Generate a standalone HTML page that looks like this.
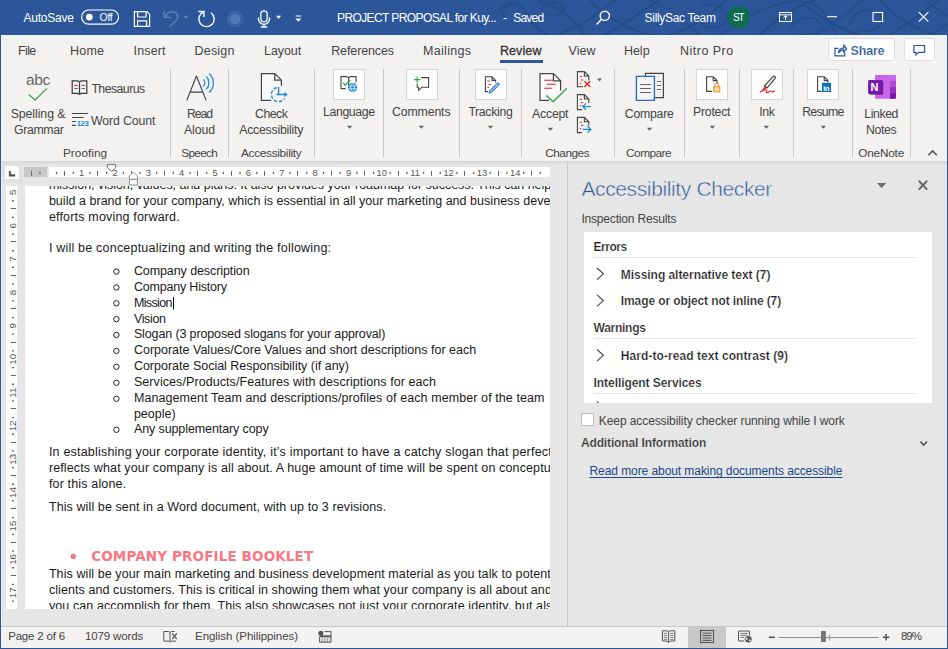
<!DOCTYPE html>
<html lang="en"><head><meta charset="utf-8"><title>PROJECT PROPOSAL - Word</title>
<style>
html,body{margin:0;padding:0;background:#e6e6e6;}
body{width:948px;height:649px;overflow:hidden;position:relative;font-family:"Liberation Sans",sans-serif;}
.a{position:absolute;}
.t{white-space:pre;}
.bx{top:69px;width:30px;height:29px;background:#fdfdfd;border:1px solid #d4d4d4;}
#pg{left:25px;top:186px;width:525px;height:423px;overflow:hidden;}
</style></head><body>

<!-- backgrounds -->
<div class="a" style="left:0;top:0;width:948px;height:35px;background:#2b579a"></div>
<div class="a" style="left:0;top:35px;width:948px;height:126px;background:#f3f2f1"></div>
<div class="a" style="left:0;top:161px;width:948px;height:465px;background:#e6e6e6"></div>
<div class="a" style="left:0;top:161px;width:948px;height:4px;background:linear-gradient(#d5d5d5,#e6e6e6)"></div>
<div class="a" style="left:0;top:626px;width:948px;height:1px;background:#c8c8c8"></div>
<div class="a" style="left:0;top:627px;width:948px;height:22px;background:#f3f2f1"></div>
<!-- tab selector, rulers, page -->
<div class="a" style="left:1px;top:162px;width:1px;height:464px;background:#efeeed"></div>
<div class="a" style="left:2px;top:162px;width:20px;height:20px;background:#dfdfdf"></div>
<div class="a" style="left:5px;top:166px;width:14px;height:13px;background:#fcfcfc"></div>
<div class="a" style="left:24px;top:167px;width:23px;height:10px;background:#c8c8c8"></div>
<div class="a" style="left:49px;top:167px;width:501px;height:10px;background:#fff"></div>
<div class="a" style="left:6px;top:186px;width:11px;height:423px;background:#fff"></div>
<div class="a" style="left:25px;top:186px;width:525px;height:423px;background:#fff"></div>
<div class="a" style="left:567px;top:164px;width:1px;height:462px;background:#c6c6c6"></div>
<!-- pane white box -->
<div class="a" style="left:584px;top:232px;width:348px;height:171px;background:#fff"></div>
<div class="a" style="left:594px;top:257px;width:321px;height:1px;background:#e1e1e1"></div>
<div class="a" style="left:594px;top:338px;width:321px;height:1px;background:#e1e1e1"></div>
<div class="a" style="left:594px;top:393px;width:321px;height:1px;background:#e1e1e1"></div>
<div class="a" style="left:581px;top:413px;width:11px;height:11px;background:#fff;border:1px solid #bdbdbd"></div>
<!-- share / comment buttons -->
<div class="a" style="left:827.5px;top:38.300px;width:65px;height:21px;background:#fdfdfd;border:1px solid #e1dfdd;border-radius:3px"></div>
<div class="a" style="left:903.500px;top:38.300px;width:29.300px;height:21px;background:#fdfdfd;border:1px solid #e1dfdd;border-radius:3px"></div>
<div class="a" style="left:500px;top:60px;width:43px;height:3px;background:#2b579a"></div>
<!-- status selected view -->
<div class="a" style="left:688px;top:627px;width:38px;height:21px;background:#c8c8c8"></div>
<!-- ribbon icon boxes -->
<div class="a bx" style="left:333px"></div>
<div class="a bx" style="left:406px"></div>
<div class="a bx" style="left:475px"></div>
<div class="a bx" style="left:696px"></div>
<div class="a bx" style="left:751px"></div>
<div class="a bx" style="left:807px"></div>

<svg class="a" style="left:0;top:0" width="948" height="649" viewBox="0 0 948 649" fill="none">
<!-- title bar swirl decoration -->
<clipPath id="tb"><rect x="0" y="0" width="948" height="35"/></clipPath>
<g stroke="#254d8b" fill="none" stroke-linecap="round" clip-path="url(#tb)">
<path d="M499 13C502 4 514 0 521 6S534 30 548 35" stroke-width="2"/>
<path d="M505 20C500 10 508 2 516 6" stroke-width="1.300"/>
<path d="M542 10C545 0 562 0 564 9C565 17 548 18 543 12" stroke-width="1.600"/>
<path d="M538 1C560 5 575 21 585 35" stroke-width="2.200"/>
<path d="M560 33C580 28 600 12 615 0" stroke-width="2"/>
<path d="M590 0C602 15 628 30 652 35" stroke-width="1.600"/>
<path d="M604 35C622 27 642 10 660 0" stroke-width="2.200"/>
<path d="M650 0C668 6 690 26 700 35" stroke-width="1.600"/>
<path d="M668 35C690 30 712 14 726 0" stroke-width="2"/>
<path d="M700 6C716 2 730 10 726 20S704 30 700 22" stroke-width="1.300"/>
<path d="M720 35C740 22 760 6 790 2S826 14 836 35" stroke-width="1.800"/>
<path d="M760 35C775 20 800 4 815 0" stroke-width="2.200"/>
<path d="M790 30C795 18 812 14 820 22S812 36 800 34" stroke-width="1.300"/>
<path d="M800 0C812 12 835 28 860 35" stroke-width="2"/>
<path d="M815 35C832 28 850 10 862 0" stroke-width="1.600"/>
<path d="M850 24C852 10 872 6 880 16S870 34 858 30" stroke-width="1.400"/>
<path d="M880 0C892 14 912 28 935 35" stroke-width="2.200"/>
<path d="M890 35C905 26 925 10 940 0" stroke-width="1.800"/>
<path d="M925 0C935 8 944 14 948 16M930 35C938 30 944 26 948 24" stroke-width="1.500"/>
</g>
<!-- autosave toggle -->
<rect x="81.6" y="10" width="37" height="14.2" rx="7.1" stroke="#fff" stroke-width="1.2"/>
<circle cx="89.300" cy="17.100" r="3.400" fill="#fff"/>
<!-- save -->
<g stroke="#fff" stroke-width="1.2">
<path d="M134.4 11.6h12.6l2.6 2.6v12.2h-15.2z"/>
<path d="M137.6 11.6v5.4h8.4v-5.4M137.6 26.4v-5.6h9v5.6"/>
</g>
<!-- undo (dim) -->
<g stroke="#6283bb" stroke-width="1.3">
<path d="M164.2 11.2v6.100h6.400"/>
<path d="M164.800 17c1.900-3.500 5.200-5.600 8.600-5.200 3.600 0.400 5.200 4 3.600 7.200-0.400 0.800-1 1.500-1.600 2.100l-6 5.700"/>
</g>
<path d="M183.400 15.700h5l-2.500 3z" fill="#6283bb"/>
<!-- redo -->
<g stroke="#fff" stroke-width="1.4">
<path d="M211 12.700A7.700 7.700 0 1 1 203.200 12"/>
<path d="M198.300 11.500h5.600v5.600"/>

</g>
<!-- record (dim) -->
<circle cx="235.200" cy="19" r="7.200" stroke="#456fb1" stroke-width="1.200"/>
<circle cx="235.200" cy="19" r="5.500" fill="#4d79b8"/>
<!-- mic -->
<g stroke="#fff" stroke-width="1.3">
<rect x="260.8" y="10.8" width="6.4" height="11" rx="3.2"/>
<path d="M258.4 17.6v1.2a5.6 5.6 0 0 0 11.2 0v-1.2M264 24.6v2.2M260.8 27h6.4"/>
</g>
<path d="M276 15.8h5.2l-2.6 3z" fill="#fff"/>
<path d="M295.6 15.4h5.6v1.2h-5.6zM295.4 18.4h6l-3 3.4z" fill="#fff"/>
<!-- search -->
<g stroke="#fff" stroke-width="1.4"><circle cx="604.8" cy="15.8" r="4.6"/><path d="M601.6 19.2l-5 5.4"/></g>
<!-- avatar -->
<circle cx="738.7" cy="17.3" r="11.3" fill="#0e6b50"/>
<!-- ribbon display options -->
<g stroke="#fff" stroke-width="1"><rect x="779.5" y="12.5" width="12" height="9"/><path d="M779.5 14.8h12M785.5 20v-4M783.5 17.6l2-2 2 2"/></g>
<!-- window controls -->
<g stroke="#fff" stroke-width="1.1"><path d="M827 16.7h10"/><rect x="873" y="12.5" width="9.6" height="9"/><path d="M918.8 12.2l9.6 9.4M928.4 12.2l-9.6 9.4"/></g>
<!-- share icon -->
<g stroke="#2b579a" stroke-width="1.200"><path d="M838.400 48.400h-3.400v7.400h9.800v-3.600"/><path d="M838.400 53c0.400-3.200 2.400-5 5.400-5.200v-2.600l2.800 3.600-2.800 3.400v-2.400c-2.200 0-4 1-5.400 3.200z" fill="#dfe6f1"/></g>
<!-- comment icon -->
<path d="M913.900 45.500h10.700v6.900h-6l-2.700 2.500v-2.500h-2z" stroke="#2b579a" stroke-width="1.200"/>
<!-- separators -->
<g stroke="#c8c6c4" stroke-width="1">
<path d="M170.5 69v88M228.5 69v88M314.5 69v88M383.5 69v88M459.5 69v88M521.5 69v88M614.5 69v88M684.5 69v88M739.5 69v88M793.5 69v88M852.5 69v88M910.5 69v88"/>
</g>
<!-- spelling check -->
<path d="M28.800 94.400l6.200 5.600 12-11.600" stroke="#3aa757" stroke-width="1.300"/>
<!-- thesaurus -->
<g stroke="#3a3a3a" stroke-width="1.200"><path d="M79.500 82v11.400M72.200 80.800h5.600l1.700 1.200 1.700-1.200h5.600v12.600h-5.600l-1.700 1-1.700-1h-5.600z"/></g>
<path d="M74.200 85.500h3.500" stroke="#e8212b" stroke-width="1.100"/>
<path d="M74.200 88.500h3.500M81.400 85.500h3.600M81.400 88.500h3.600" stroke="#666" stroke-width="1.100"/>
<!-- word count -->
<g stroke="#444" stroke-width="1.200"><path d="M72 113.500h16M72 117.500h11.600M72 121.500h3.800M72 125.400h3.800"/></g>
<text x="76.700" y="125.700" font-family="Liberation Sans, sans-serif" font-size="7.800" font-weight="700" fill="#1e8bcd" letter-spacing="-0.450">123</text>
<!-- read aloud -->
<path d="M186.8 100.4l9.5-24h0.3l9.5 24M190.2 92.2h12.4" stroke="#444" stroke-width="1.2"/>
<g stroke="#1e8bcd" stroke-width="1.3"><path d="M203.4 79.4a5 5 0 0 1 0 7"/><path d="M206.2 76.4a9 9 0 0 1 0 13"/><path d="M209.2 73.4a13 13 0 0 1 0 19"/></g>
<!-- check accessibility -->
<path d="M281.400 86v-5.800l-6.600-6.600h-13.400v26.800h9.600v-14.400z" fill="#fafafa" stroke="none"/><path d="M281.400 86v-5.800l-6.600-6.600h-13.400v26.800h9.600M274.800 73.600v6.600h6.600" stroke="#444" stroke-width="1.200"/>
<path d="M276.700 87.500A7.200 7.200 0 1 0 284.500 98.600" stroke="#1e8bcd" stroke-width="1.300" stroke-dasharray="3.400 1.800"/>
<path d="M278.600 87v7.500M276.400 94.500h9" stroke="#1e8bcd" stroke-width="1.300"/><path d="M284.400 92l3.400 2.500-3.400 2.500z" fill="#1e8bcd"/>
<!-- language -->
<path d="M348.6 77.6v9.2M345.6 88.6h-4.6v-12h5.8l1.8 1.2 1.8-1.2h5.6v6" stroke="#444" stroke-width="1.1"/>
<path d="M343.2 82.8l2.2 2.4 5-5.4" stroke="#3aa757" stroke-width="1.3"/>
<circle cx="352.6" cy="87.4" r="4.6" fill="#1e8bcd"/>
<g stroke="#fff" stroke-width="0.7"><ellipse cx="352.6" cy="87.4" rx="1.9" ry="4"/><path d="M348.4 86h8.4M348.4 88.8h8.4"/></g>
<!-- comments -->
<path d="M421.2 77.6h7.4v9.6h-6.6l-3.4 3v-3h-1.4v-3.6" stroke="#444" stroke-width="1.1"/>
<path d="M417.2 76.4v6.4M414 79.6h6.4" stroke="#2ea44f" stroke-width="1.2"/>
<!-- tracking -->
<path d="M488 91.6h-2.6v-14.8h6.6l3.6 3.6v2.2M492 76.8v3.6h3.6" stroke="#444" stroke-width="1.1"/>
<path d="M487.4 81h2.4M488.4 84.4h2.4M487.4 87.6h1.6" stroke="#e8212b" stroke-width="1"/>
<path d="M497.800 82.600l1.800 1.800-8 8-2.600 0.800 0.800-2.600z" fill="#7fb2e6" stroke="#2b78c5" stroke-width="1"/>
<path d="M495.8 84.6l1.8 1.8" stroke="#fff" stroke-width="0.6"/>
<!-- accept -->
<path d="M549 100.400h-9v-26.800h13.400l7.200 7.200v9.600z" fill="#fafafa" stroke="none"/><path d="M549 100.400h-9v-26.800h13.400l7.200 7.200v9.600M553.400 73.600v7.200h7.200" stroke="#444" stroke-width="1.200"/>
<path d="M544.2 80.2h9.6M546.8 84.2h9M544.2 88.2h8" stroke="#e8212b" stroke-width="1.1"/>
<path d="M546.2 95.4l7 6.4 13.6-13.6" stroke="#3aa757" stroke-width="1.5"/>
<!-- reject -->
<path d="M583 86.8h-5.6v-15.2h7l4.4 4.4v4.6M584.4 71.6v4.4h4.4" stroke="#444" stroke-width="1.1"/>
<path d="M579.8 76.6h2.4M581 80h2.2M579.8 83.2h1.4" stroke="#e8212b" stroke-width="1"/>
<path d="M584.4 81.2l5.8 5.8M590.2 81.2l-5.8 5.8" stroke="#e8212b" stroke-width="1.3"/>
<path d="M597 78.400h5l-2.500 3z" fill="#666"/>
<!-- previous -->
<path d="M582 109.6h-4.6v-15h7l4.4 4.4v4M584.4 94.6v4.4h4.4" stroke="#444" stroke-width="1.1"/>
<path d="M579.8 99.4h2.4M581 102.6h2.2M579.8 105.8h1.4" stroke="#e8212b" stroke-width="1"/>
<path d="M591 106.6h-8M586 103.4l-3.2 3.2 3.2 3.2" stroke="#1e8bcd" stroke-width="1.3"/>
<!-- next -->
<path d="M582 132.6h-4.6v-15.2h7l4.4 4.4v4M584.4 117.4v4.4h4.4" stroke="#444" stroke-width="1.1"/>
<path d="M579.8 122.2h2.4M581 125.4h2.2M579.8 128.6h1.4" stroke="#e8212b" stroke-width="1"/>
<path d="M582.6 129.4h8M587.6 126.2l3.2 3.2-3.2 3.2" stroke="#1e8bcd" stroke-width="1.3"/>
<!-- compare -->
<path d="M645.4 73.4h18v24.2h-18z" stroke="#444" stroke-width="1.2" fill="#f3f2f1"/>
<path d="M657 81.500h4M657 85.500h4M657 89.500h4" stroke="#666" stroke-width="1"/>
<path d="M636.400 76.400h18v24h-18z" stroke="#2b6fc0" stroke-width="1.400" fill="#f5f5f5"/>
<path d="M640 84.500h11M640 88.500h11M640 92.500h11" stroke="#666" stroke-width="1"/>
<!-- protect -->
<path d="M712 91.4h-5.4v-14.6h6.6l3.8 3.8v2.4M713.2 76.8v3.8h3.8" stroke="#444" stroke-width="1.1"/>
<path d="M714.8 86.8v-1.6a1.9 1.9 0 0 1 3.8 0v1.6" stroke="#e8912d" stroke-width="1.1"/>
<rect x="713.6" y="86.8" width="6.2" height="5" fill="#fad7a6" stroke="#e8912d" stroke-width="1"/>
<!-- ink -->
<path d="M773.200 76.400c1-1 2.900 0.500 2 1.800l-8 9.800-2.600-2.200z" stroke="#444" stroke-width="1.200" fill="#fbfbfb"/>
<path d="M764.6 86.2l2.2 1.8-5.8 3.8z" fill="#e8212b"/>
<path d="M759.8 92c2.4-0.6 5.4-3.2 6.6-2 1 1-1.4 2.600 0.200 2.600 2.400 0 2.800-1.600 4.200-1.600 1.200 0 0.600 1 1.800 0.800l2.400-1" stroke="#e8212b" stroke-width="1.200"/>
<!-- resume -->
<path d="M821.6 91.4h-4v-14.600h6.600l3.800 3.800v1.800M824.200 76.800v3.800h3.800" stroke="#444" stroke-width="1.1"/>
<rect x="822" y="82.800" width="9" height="9.200" fill="#0a78b5"/>
<text x="823.200" y="90.600" font-family="Liberation Sans, sans-serif" font-size="7.400" font-weight="700" fill="#fff" letter-spacing="-0.200">in</text>
<!-- onenote -->
<rect x="875" y="74.900" width="21" height="23.900" rx="1.200" fill="#ca64ea"/>
<path d="M890 80.900h6v6.100h-6z" fill="#ae4bd5"/><path d="M890 87h6v5.900h-6z" fill="#9332bf"/><path d="M890 92.900h6v4.700a1.200 1.200 0 0 1-1.200 1.200h-4.800z" fill="#7719aa"/>
<rect x="869" y="80.800" width="14.200" height="13.900" rx="1.400" fill="#3b0f5c" opacity="0.750"/>
<rect x="868.100" y="80" width="14.300" height="13.900" rx="1.400" fill="#7719aa"/>
<text x="870.600" y="90.900" font-family="Liberation Sans, sans-serif" font-size="11" font-weight="700" fill="#fff">N</text>
<!-- dropdown arrows -->
<g fill="#666">
<path d="M346.900 125.800h5.400l-2.700 3z"/><path d="M418.700 125.800h5.400l-2.700 3z"/><path d="M487.800 125.800h5.400l-2.700 3z"/>
<path d="M547.700 127.700h5.400l-2.700 3z"/><path d="M646.800 127.700h5.400l-2.700 3z"/>
<path d="M709.700 125.800h5.400l-2.700 3z"/><path d="M763.700 125.800h5.400l-2.700 3z"/><path d="M820.700 125.800h5.400l-2.700 3z"/>
</g>
<path d="M928.400 155.200l4.200-4.200 4.200 4.200" stroke="#555" stroke-width="1.600"/>
<!-- tab selector L -->
<path d="M9.900 171v4.400h5.300" stroke="#555" stroke-width="2.100"/>
</svg>

<div class="a" id="pg">
<div class="a t" style='left:23.90px;top:-9.33px;font-size:12.5px;line-height:16px;color:#1a1a1a;letter-spacing:-0.028px;'>mission, vision, values, and plans. It also provides your roadmap for success. This can help you</div>
<div class="a t" style='left:23.90px;top:7.27px;font-size:12.5px;line-height:16px;color:#1a1a1a;letter-spacing:0.032px;'>build a brand for your company, which is essential in all your marketing and business development</div>
<div class="a t" style='left:23.90px;top:22.57px;font-size:12.5px;line-height:16px;color:#1a1a1a;letter-spacing:0.178px;'>efforts moving forward.</div>
<div class="a t" style='left:23.90px;top:54.17px;font-size:12.5px;line-height:16px;color:#1a1a1a;letter-spacing:0.206px;'>I will be conceptualizing and writing the following:</div>
<div class="a t" style='left:108.90px;top:76.87px;font-size:12.5px;line-height:16px;color:#1a1a1a;letter-spacing:-0.091px;'>Company description</div>
<div class="a t" style='left:108.90px;top:92.77px;font-size:12.5px;line-height:16px;color:#1a1a1a;letter-spacing:-0.192px;'>Company History</div>
<div class="a t" style='left:108.90px;top:108.57px;font-size:12.5px;line-height:16px;color:#1a1a1a;letter-spacing:-0.625px;'>Mission</div>
<div class="a t" style='left:108.90px;top:124.97px;font-size:12.5px;line-height:16px;color:#1a1a1a;letter-spacing:-0.355px;'>Vision</div>
<div class="a t" style='left:108.90px;top:140.27px;font-size:12.5px;line-height:16px;color:#1a1a1a;letter-spacing:-0.127px;'>Slogan (3 proposed slogans for your approval)</div>
<div class="a t" style='left:108.90px;top:156.17px;font-size:12.5px;line-height:16px;color:#1a1a1a;letter-spacing:0.003px;'>Corporate Values/Core Values and short descriptions for each</div>
<div class="a t" style='left:108.90px;top:172.07px;font-size:12.5px;line-height:16px;color:#1a1a1a;letter-spacing:-0.007px;'>Corporate Social Responsibility (if any)</div>
<div class="a t" style='left:108.90px;top:188.07px;font-size:12.5px;line-height:16px;color:#1a1a1a;letter-spacing:0.076px;'>Services/Products/Features with descriptions for each</div>
<div class="a t" style='left:108.90px;top:204.07px;font-size:12.5px;line-height:16px;color:#1a1a1a;letter-spacing:0.086px;'>Management Team and descriptions/profiles of each member of the team</div>
<div class="a t" style='left:108.90px;top:219.97px;font-size:12.5px;line-height:16px;color:#1a1a1a;letter-spacing:-0.000px;'>people)</div>
<div class="a t" style='left:108.90px;top:235.07px;font-size:12.5px;line-height:16px;color:#1a1a1a;letter-spacing:-0.100px;'>Any supplementary copy</div>
<div class="a t" style='left:23.90px;top:258.07px;font-size:12.5px;line-height:16px;color:#1a1a1a;letter-spacing:0.201px;'>In establishing your corporate identity, it’s important to have a catchy slogan that perfectly</div>
<div class="a t" style='left:23.90px;top:273.97px;font-size:12.5px;line-height:16px;color:#1a1a1a;letter-spacing:0.130px;'>reflects what your company is all about. A huge amount of time will be spent on conceptualizing</div>
<div class="a t" style='left:23.90px;top:289.97px;font-size:12.5px;line-height:16px;color:#1a1a1a;letter-spacing:0.157px;'>for this alone.</div>
<div class="a t" style='left:23.90px;top:312.97px;font-size:12.5px;line-height:16px;color:#1a1a1a;letter-spacing:0.102px;'>This will be sent in a Word document, with up to 3 revisions.</div>
<div class="a t" style='left:66.20px;top:361.33px;font-size:13.5px;line-height:18px;color:#f97682;letter-spacing:0.136px;font-weight:700;font-family:"DejaVu Sans", "Liberation Sans", sans-serif;'>COMPANY PROFILE BOOKLET</div>
<div class="a t" style='left:23.90px;top:380.07px;font-size:12.5px;line-height:16px;color:#1a1a1a;letter-spacing:0.091px;'>This will be your main marketing and business development material as you talk to potential</div>
<div class="a t" style='left:23.90px;top:395.87px;font-size:12.5px;line-height:16px;color:#1a1a1a;letter-spacing:0.080px;'>clients and customers. This is critical in showing them what your company is all about and what</div>
<div class="a t" style='left:23.90px;top:411.67px;font-size:12.5px;line-height:16px;color:#1a1a1a;letter-spacing:0.095px;'>you can accomplish for them. This also showcases not just your corporate identity, but also</div>
</div>
<svg class="a" style="left:0;top:0" width="948" height="649" viewBox="0 0 948 649" fill="none">
<path d="M31.5 170.900v4.900M64.5 170.900v4.900M97.5 170.900v4.900M131.5 170.900v4.900M164.5 170.900v4.900M197.5 170.900v4.900M231.5 170.900v4.900M264.5 170.900v4.900M297.5 170.900v4.900M331.5 170.900v4.900M364.5 170.900v4.900M398.5 170.900v4.900M431.5 170.900v4.900M464.5 170.900v4.900M498.5 170.900v4.900M531.5 170.900v4.900" stroke="#666" stroke-width="1"/>
<path d="M39.3 171.800h1.300v2.200h-1.300zM55.9 171.800h1.300v2.200h-1.300zM72.6 171.800h1.300v2.200h-1.300zM89.3 171.800h1.300v2.200h-1.300zM106.0 171.800h1.300v2.200h-1.300zM122.7 171.800h1.300v2.200h-1.300zM139.3 171.800h1.300v2.200h-1.300zM156.0 171.800h1.300v2.200h-1.300zM172.7 171.800h1.300v2.200h-1.300zM189.4 171.800h1.300v2.200h-1.300zM206.1 171.800h1.300v2.200h-1.300zM222.7 171.800h1.300v2.200h-1.300zM239.4 171.800h1.300v2.200h-1.300zM256.1 171.800h1.300v2.200h-1.300zM272.8 171.800h1.300v2.200h-1.300zM289.4 171.800h1.300v2.200h-1.300zM306.1 171.800h1.300v2.200h-1.300zM322.8 171.800h1.300v2.200h-1.300zM339.5 171.800h1.300v2.200h-1.300zM356.2 171.800h1.300v2.200h-1.300zM372.9 171.800h1.300v2.200h-1.300zM389.5 171.800h1.300v2.200h-1.300zM406.2 171.800h1.300v2.200h-1.300zM422.9 171.800h1.300v2.200h-1.300zM439.6 171.800h1.300v2.200h-1.300zM456.2 171.800h1.300v2.200h-1.300zM472.9 171.800h1.300v2.200h-1.300zM489.6 171.800h1.300v2.200h-1.300zM506.3 171.800h1.300v2.200h-1.300zM523.0 171.800h1.300v2.200h-1.300zM539.6 171.800h1.300v2.200h-1.300z" fill="#666"/>
<text x="81.6" y="175.900" text-anchor="middle" font-family="Liberation Sans, sans-serif" font-size="9.400" fill="#555">1</text>
<text x="115.0" y="175.900" text-anchor="middle" font-family="Liberation Sans, sans-serif" font-size="9.400" fill="#555">2</text>
<text x="148.3" y="175.900" text-anchor="middle" font-family="Liberation Sans, sans-serif" font-size="9.400" fill="#555">3</text>
<text x="181.7" y="175.900" text-anchor="middle" font-family="Liberation Sans, sans-serif" font-size="9.400" fill="#555">4</text>
<text x="215.0" y="175.900" text-anchor="middle" font-family="Liberation Sans, sans-serif" font-size="9.400" fill="#555">5</text>
<text x="248.4" y="175.900" text-anchor="middle" font-family="Liberation Sans, sans-serif" font-size="9.400" fill="#555">6</text>
<text x="281.8" y="175.900" text-anchor="middle" font-family="Liberation Sans, sans-serif" font-size="9.400" fill="#555">7</text>
<text x="315.1" y="175.900" text-anchor="middle" font-family="Liberation Sans, sans-serif" font-size="9.400" fill="#555">8</text>
<text x="348.5" y="175.900" text-anchor="middle" font-family="Liberation Sans, sans-serif" font-size="9.400" fill="#555">9</text>
<text x="381.8" y="175.900" text-anchor="middle" font-family="Liberation Sans, sans-serif" font-size="9.400" fill="#555">10</text>
<text x="415.2" y="175.900" text-anchor="middle" font-family="Liberation Sans, sans-serif" font-size="9.400" fill="#555">11</text>
<text x="448.6" y="175.900" text-anchor="middle" font-family="Liberation Sans, sans-serif" font-size="9.400" fill="#555">12</text>
<text x="481.9" y="175.900" text-anchor="middle" font-family="Liberation Sans, sans-serif" font-size="9.400" fill="#555">13</text>
<text x="515.3" y="175.900" text-anchor="middle" font-family="Liberation Sans, sans-serif" font-size="9.400" fill="#555">14</text>
<path d="M10.800 208.5h5.400M10.800 241.5h5.400M10.800 275.5h5.400M10.800 308.5h5.400M10.800 342.5h5.400M10.800 375.5h5.400M10.800 408.5h5.400M10.800 442.5h5.400M10.800 475.5h5.400M10.800 508.5h5.400M10.800 542.5h5.400M10.800 575.5h5.400" stroke="#666" stroke-width="1"/>
<path d="M11.900 200.1h2.100v1.300h-2.100zM11.900 216.8h2.100v1.300h-2.100zM11.900 233.5h2.100v1.300h-2.100zM11.900 250.1h2.100v1.300h-2.100zM11.900 266.8h2.100v1.300h-2.100zM11.900 283.5h2.100v1.300h-2.100zM11.900 300.2h2.100v1.300h-2.100zM11.900 316.9h2.100v1.300h-2.100zM11.900 333.5h2.100v1.300h-2.100zM11.900 350.2h2.100v1.300h-2.100zM11.900 366.9h2.100v1.300h-2.100zM11.900 383.6h2.100v1.300h-2.100zM11.900 400.2h2.100v1.300h-2.100zM11.900 416.9h2.100v1.300h-2.100zM11.900 433.6h2.100v1.300h-2.100zM11.900 450.3h2.100v1.300h-2.100zM11.900 467.0h2.100v1.300h-2.100zM11.900 483.6h2.100v1.300h-2.100zM11.900 500.3h2.100v1.300h-2.100zM11.900 517.0h2.100v1.300h-2.100zM11.900 533.7h2.100v1.300h-2.100zM11.900 550.4h2.100v1.300h-2.100zM11.900 567.1h2.100v1.300h-2.100zM11.900 583.7h2.100v1.300h-2.100zM11.900 600.4h2.100v1.300h-2.100z" fill="#666"/>
<text transform="translate(16.100 192.4) rotate(-90)" text-anchor="middle" font-family="Liberation Sans, sans-serif" font-size="9.800" fill="#555">5</text>
<text transform="translate(16.100 225.8) rotate(-90)" text-anchor="middle" font-family="Liberation Sans, sans-serif" font-size="9.800" fill="#555">6</text>
<text transform="translate(16.100 259.1) rotate(-90)" text-anchor="middle" font-family="Liberation Sans, sans-serif" font-size="9.800" fill="#555">7</text>
<text transform="translate(16.100 292.5) rotate(-90)" text-anchor="middle" font-family="Liberation Sans, sans-serif" font-size="9.800" fill="#555">8</text>
<text transform="translate(16.100 325.8) rotate(-90)" text-anchor="middle" font-family="Liberation Sans, sans-serif" font-size="9.800" fill="#555">9</text>
<text transform="translate(16.100 359.2) rotate(-90)" text-anchor="middle" font-family="Liberation Sans, sans-serif" font-size="9.800" fill="#555">10</text>
<text transform="translate(16.100 392.6) rotate(-90)" text-anchor="middle" font-family="Liberation Sans, sans-serif" font-size="9.800" fill="#555">11</text>
<text transform="translate(16.100 425.9) rotate(-90)" text-anchor="middle" font-family="Liberation Sans, sans-serif" font-size="9.800" fill="#555">12</text>
<text transform="translate(16.100 459.3) rotate(-90)" text-anchor="middle" font-family="Liberation Sans, sans-serif" font-size="9.800" fill="#555">13</text>
<text transform="translate(16.100 492.6) rotate(-90)" text-anchor="middle" font-family="Liberation Sans, sans-serif" font-size="9.800" fill="#555">14</text>
<text transform="translate(16.100 526.0) rotate(-90)" text-anchor="middle" font-family="Liberation Sans, sans-serif" font-size="9.800" fill="#555">15</text>
<text transform="translate(16.100 559.4) rotate(-90)" text-anchor="middle" font-family="Liberation Sans, sans-serif" font-size="9.800" fill="#555">16</text>
<text transform="translate(16.100 592.7) rotate(-90)" text-anchor="middle" font-family="Liberation Sans, sans-serif" font-size="9.800" fill="#555">17</text>
<path d="M107.400 164.600h8.200v3l-4.100 3.900-4.100-3.900z" fill="#f6f6f6" stroke="#7a7a7a" stroke-width="1"/>
<path d="M133.4 172l4 4v3.2h-8v-3.200z" fill="#fdfdfd" stroke="#8a8a8a" stroke-width="0.9"/>
<path d="M129.400 179.600h8v5.400h-8z" fill="#fdfdfd" stroke="#8a8a8a" stroke-width="0.9"/>
<circle cx="116.400" cy="271.6" r="2.700" stroke="#1a1a1a" stroke-width="0.950"/>
<circle cx="116.400" cy="287.5" r="2.700" stroke="#1a1a1a" stroke-width="0.950"/>
<circle cx="116.400" cy="303.3" r="2.700" stroke="#1a1a1a" stroke-width="0.950"/>
<circle cx="116.400" cy="319.1" r="2.700" stroke="#1a1a1a" stroke-width="0.950"/>
<circle cx="116.400" cy="335.0" r="2.700" stroke="#1a1a1a" stroke-width="0.950"/>
<circle cx="116.400" cy="350.9" r="2.700" stroke="#1a1a1a" stroke-width="0.950"/>
<circle cx="116.400" cy="366.8" r="2.700" stroke="#1a1a1a" stroke-width="0.950"/>
<circle cx="116.400" cy="382.8" r="2.700" stroke="#1a1a1a" stroke-width="0.950"/>
<circle cx="116.400" cy="398.8" r="2.700" stroke="#1a1a1a" stroke-width="0.950"/>
<circle cx="116.400" cy="429.8" r="2.700" stroke="#1a1a1a" stroke-width="0.950"/>
<circle cx="73.300" cy="556.400" r="2.700" fill="#f97682"/>
<path d="M173.500 297v12.500" stroke="#000" stroke-width="1"/>
<path d="M876.900 183h9.400l-4.700 5z" fill="#6a6a6a"/>
<path d="M918.800 180.800l8.400 8.800M927.200 180.800l-8.400 8.800" stroke="#666" stroke-width="2"/>
<path d="M597 268.0l6.400 5.800-6.400 5.800" stroke="#444" stroke-width="1.100"/>
<path d="M597 294.8l6.400 5.800-6.400 5.800" stroke="#444" stroke-width="1.100"/>
<path d="M597 349.5l6.400 5.800-6.400 5.800" stroke="#444" stroke-width="1.100"/>
<path d="M597 401.400l1.600 1.600" stroke="#555" stroke-width="1.100"/>
<path d="M920.400 441.600l3.300 3.400 3.300-3.400" stroke="#555" stroke-width="1.600"/>
<path d="M170 632.400v9.600M170 632.400l-1.400-0.900h-4.800v9.600h4.800l1.400 0.900M170 632.400l1.400-0.900h3.200M170 642l1.400-0.900h4.800" stroke="#555" stroke-width="1"/>
<path d="M172.200 633.400l4.600 5.800M176.800 633.400l-4.600 5.800" stroke="#555" stroke-width="1.300"/>
<circle cx="320.800" cy="633.200" r="2.500" fill="#555"/>
<path d="M324.400 631.600h6.600v10.600h-11.400v-5.600" stroke="#555" stroke-width="1"/>
<rect x="319.600" y="635.300" width="11.400" height="2" fill="#555"/>
<path d="M321.600 639h8.400M321.600 641h8.400" stroke="#555" stroke-width="1" stroke-dasharray="1.400 1.200"/>
<path d="M668.600 631.600v10.400M662.400 630.800h4.600l1.600 1 1.600-1h4.600v10.200h-4.600l-1.600 1.600-1.600-1.600h-4.600z" stroke="#555" stroke-width="1"/>
<path d="M663.800 633.400h3.400M663.800 635.400h3.400M663.800 637.400h3.400M663.800 639.400h3.400M670.200 633.400h3.400M670.200 635.400h3.400M670.200 637.400h3.400M670.200 639.400h3.400" stroke="#555" stroke-width="0.700"/>
<rect x="700.500" y="630.500" width="13" height="12" stroke="#555" stroke-width="1.100"/>
<path d="M702.400 633.200h9.200M702.400 635.600h9.200M702.400 638h9.200M702.400 640.400h9.200" stroke="#555" stroke-width="1"/>
<path d="M744 641h-5.500v-10h11v4.600" stroke="#555" stroke-width="1"/>
<path d="M740.400 633.400h7.200M740.400 635.400h7.200M740.400 637.400h3.600" stroke="#555" stroke-width="0.800"/>
<circle cx="748.400" cy="639.200" r="3.800" fill="#555" stroke="#f3f2f1" stroke-width="0.800"/>
<path d="M746 637.600l1.800 0.600-0.400 1.800-1.600-0.400zM749.200 639.400l1.800 0.400-0.600 1.800-1.400-0.600z" fill="#e8e8e8"/>
<path d="M768.800 637.300h6" stroke="#555" stroke-width="1.600"/>
<path d="M778.700 637.500h100" stroke="#8a8a8a" stroke-width="1"/>
<path d="M829.500 634.600v5.800" stroke="#a0a0a0" stroke-width="1"/>
<rect x="821" y="631" width="4.900" height="11" fill="#777"/>
<path d="M882.800 637.300h6.600M886.100 634v6.600" stroke="#555" stroke-width="1.600"/>
<path d="M0.500 35v614M947.500 35v614M0 648.500h948" stroke="#2b579a" stroke-width="1"/>
</svg>
<div class="a t" style='left:23.60px;top:9.84px;font-size:12px;line-height:16px;color:#fff;letter-spacing:-0.256px;'>AutoSave</div>
<div class="a t" style='left:99.60px;top:9.96px;font-size:10.5px;line-height:14px;color:#fff;letter-spacing:-0.371px;'>Off</div>
<div class="a t" style='left:337.00px;top:9.84px;font-size:12px;line-height:16px;color:#fff;letter-spacing:-0.599px;'>PROJECT PROPOSAL for Kuy...</div>
<div class="a t" style='left:503.10px;top:9.84px;font-size:12px;line-height:16px;color:#fff;letter-spacing:0.000px;'>-</div>
<div class="a t" style='left:513.30px;top:9.84px;font-size:12px;line-height:16px;color:#fff;letter-spacing:-0.806px;'>Saved</div>
<div class="a t" style='left:644.60px;top:9.84px;font-size:12px;line-height:16px;color:#fff;letter-spacing:-0.319px;'>SillySac Team</div>
<div class="a t" style='left:733.00px;top:11.23px;font-size:10px;line-height:13px;color:#fff;letter-spacing:-1.091px;'>ST</div>
<div class="a t" style='left:18.10px;top:42.87px;font-size:12.5px;line-height:16px;color:#444;letter-spacing:-0.664px;'>File</div>
<div class="a t" style='left:70.10px;top:42.87px;font-size:12.5px;line-height:16px;color:#444;letter-spacing:0.164px;'>Home</div>
<div class="a t" style='left:133.60px;top:42.87px;font-size:12.5px;line-height:16px;color:#444;letter-spacing:0.122px;'>Insert</div>
<div class="a t" style='left:194.60px;top:42.87px;font-size:12.5px;line-height:16px;color:#444;letter-spacing:0.180px;'>Design</div>
<div class="a t" style='left:264.10px;top:42.87px;font-size:12.5px;line-height:16px;color:#444;letter-spacing:-0.089px;'>Layout</div>
<div class="a t" style='left:331.20px;top:42.87px;font-size:12.5px;line-height:16px;color:#444;letter-spacing:-0.114px;'>References</div>
<div class="a t" style='left:423.10px;top:42.87px;font-size:12.5px;line-height:16px;color:#444;letter-spacing:0.280px;'>Mailings</div>
<div class="a t" style='left:568.60px;top:42.87px;font-size:12.5px;line-height:16px;color:#444;letter-spacing:0.031px;'>View</div>
<div class="a t" style='left:623.90px;top:42.87px;font-size:12.5px;line-height:16px;color:#444;letter-spacing:-0.005px;'>Help</div>
<div class="a t" style='left:680.10px;top:42.87px;font-size:12.5px;line-height:16px;color:#444;letter-spacing:0.464px;'>Nitro Pro</div>
<div class="a t" style='left:499.90px;top:42.87px;font-size:12.5px;line-height:16px;color:#333;letter-spacing:0.117px;-webkit-text-stroke:0.3px #333;'>Review</div>
<div class="a t" style='left:850.60px;top:42.87px;font-size:12.5px;line-height:16px;color:#2b579a;letter-spacing:-0.210px;font-weight:700;-webkit-text-stroke:0.2px #fdfdfd;'>Share</div>
<div class="a t" style='left:26.10px;top:69.83px;font-size:15.5px;line-height:20px;color:#444;letter-spacing:-0.433px;-webkit-text-stroke:0.2px #f3f2f1;'>abc</div>
<div class="a t" style='left:10.70px;top:106.14px;font-size:12.3px;line-height:16px;color:#444;letter-spacing:-0.067px;'>Spelling &amp;</div>
<div class="a t" style='left:13.90px;top:122.14px;font-size:12.3px;line-height:16px;color:#444;letter-spacing:-0.317px;'>Grammar</div>
<div class="a t" style='left:91.40px;top:81.24px;font-size:12.3px;line-height:16px;color:#444;letter-spacing:-0.545px;'>Thesaurus</div>
<div class="a t" style='left:91.10px;top:112.94px;font-size:12.3px;line-height:16px;color:#444;letter-spacing:-0.119px;'>Word Count</div>
<div class="a t" style='left:187.00px;top:105.94px;font-size:12.3px;line-height:16px;color:#444;letter-spacing:-1.077px;'>Read</div>
<div class="a t" style='left:183.90px;top:122.14px;font-size:12.3px;line-height:16px;color:#444;letter-spacing:-0.071px;'>Aloud</div>
<div class="a t" style='left:255.10px;top:105.94px;font-size:12.3px;line-height:16px;color:#444;letter-spacing:-0.512px;'>Check</div>
<div class="a t" style='left:239.20px;top:122.14px;font-size:12.3px;line-height:16px;color:#444;letter-spacing:-0.228px;'>Accessibility</div>
<div class="a t" style='left:323.10px;top:103.74px;font-size:12.3px;line-height:16px;color:#444;letter-spacing:-0.402px;'>Language</div>
<div class="a t" style='left:392.10px;top:103.74px;font-size:12.3px;line-height:16px;color:#444;letter-spacing:-0.144px;'>Comments</div>
<div class="a t" style='left:468.40px;top:103.74px;font-size:12.3px;line-height:16px;color:#444;letter-spacing:-0.338px;'>Tracking</div>
<div class="a t" style='left:532.10px;top:105.94px;font-size:12.3px;line-height:16px;color:#444;letter-spacing:-0.232px;'>Accept</div>
<div class="a t" style='left:624.80px;top:105.94px;font-size:12.3px;line-height:16px;color:#444;letter-spacing:-0.254px;'>Compare</div>
<div class="a t" style='left:693.00px;top:103.74px;font-size:12.3px;line-height:16px;color:#444;letter-spacing:-0.238px;'>Protect</div>
<div class="a t" style='left:759.30px;top:103.74px;font-size:12.3px;line-height:16px;color:#444;letter-spacing:-0.369px;'>Ink</div>
<div class="a t" style='left:802.20px;top:103.74px;font-size:12.3px;line-height:16px;color:#444;letter-spacing:-0.733px;'>Resume</div>
<div class="a t" style='left:864.20px;top:105.94px;font-size:12.3px;line-height:16px;color:#444;letter-spacing:-0.392px;'>Linked</div>
<div class="a t" style='left:866.00px;top:122.14px;font-size:12.3px;line-height:16px;color:#444;letter-spacing:-0.365px;'>Notes</div>
<div class="a t" style='left:62.90px;top:145.91px;font-size:11.8px;line-height:15px;color:#444;letter-spacing:0.043px;'>Proofing</div>
<div class="a t" style='left:181.30px;top:145.91px;font-size:11.8px;line-height:15px;color:#444;letter-spacing:-0.703px;'>Speech</div>
<div class="a t" style='left:241.00px;top:145.91px;font-size:11.8px;line-height:15px;color:#444;letter-spacing:-0.296px;'>Accessibility</div>
<div class="a t" style='left:545.20px;top:145.91px;font-size:11.8px;line-height:15px;color:#444;letter-spacing:-0.476px;'>Changes</div>
<div class="a t" style='left:626.10px;top:145.91px;font-size:11.8px;line-height:15px;color:#444;letter-spacing:-0.504px;'>Compare</div>
<div class="a t" style='left:858.30px;top:145.91px;font-size:11.8px;line-height:15px;color:#444;letter-spacing:-0.217px;'>OneNote</div>
<div class="a t" style='left:581.40px;top:174.92px;font-size:21px;line-height:27px;color:#2b579a;letter-spacing:-0.372px;-webkit-text-stroke:0.5px #e6e6e6;'>Accessibility Checker</div>
<div class="a t" style='left:581.40px;top:211.24px;font-size:12px;line-height:16px;color:#444;letter-spacing:-0.176px;'>Inspection Results</div>
<div class="a t" style='left:593.60px;top:239.04px;font-size:12px;line-height:16px;color:#1c1c1c;letter-spacing:-0.505px;font-weight:700;-webkit-text-stroke:0.22px #fff;'>Errors</div>
<div class="a t" style='left:620.80px;top:266.94px;font-size:12px;line-height:16px;color:#1c1c1c;letter-spacing:-0.040px;font-weight:700;-webkit-text-stroke:0.22px #fff;'>Missing alternative text (7)</div>
<div class="a t" style='left:620.80px;top:293.14px;font-size:12px;line-height:16px;color:#1c1c1c;letter-spacing:-0.102px;font-weight:700;-webkit-text-stroke:0.22px #fff;'>Image or object not inline (7)</div>
<div class="a t" style='left:593.60px;top:320.24px;font-size:12px;line-height:16px;color:#1c1c1c;letter-spacing:-0.279px;font-weight:700;-webkit-text-stroke:0.22px #fff;'>Warnings</div>
<div class="a t" style='left:620.80px;top:347.74px;font-size:12px;line-height:16px;color:#1c1c1c;letter-spacing:0.061px;font-weight:700;-webkit-text-stroke:0.22px #fff;'>Hard-to-read text contrast (9)</div>
<div class="a t" style='left:593.60px;top:374.84px;font-size:12px;line-height:16px;color:#1c1c1c;letter-spacing:-0.070px;font-weight:700;-webkit-text-stroke:0.22px #fff;'>Intelligent Services</div>
<div class="a t" style='left:598.80px;top:413.34px;font-size:12px;line-height:16px;color:#444;letter-spacing:-0.088px;'>Keep accessibility checker running while I work</div>
<div class="a t" style='left:580.90px;top:434.84px;font-size:12px;line-height:16px;color:#333;letter-spacing:-0.127px;font-weight:700;-webkit-text-stroke:0.22px #e6e6e6;'>Additional Information</div>
<div class="a t" style='left:589.50px;top:463.04px;font-size:12px;line-height:16px;color:#1a4789;letter-spacing:-0.075px;text-decoration:underline;text-underline-offset:1.5px;text-decoration-thickness:1.2px;'>Read more about making documents accessible</div>
<div class="a t" style='left:8.20px;top:629.42px;font-size:11.5px;line-height:15px;color:#444;letter-spacing:-0.193px;'>Page 2 of 6</div>
<div class="a t" style='left:85.00px;top:629.42px;font-size:11.5px;line-height:15px;color:#444;letter-spacing:-0.137px;'>1079 words</div>
<div class="a t" style='left:195.10px;top:629.42px;font-size:11.5px;line-height:15px;color:#444;letter-spacing:-0.062px;'>English (Philippines)</div>
<div class="a t" style='left:900.90px;top:629.42px;font-size:11.5px;line-height:15px;color:#444;letter-spacing:-1.010px;'>89%</div>
</body></html>
